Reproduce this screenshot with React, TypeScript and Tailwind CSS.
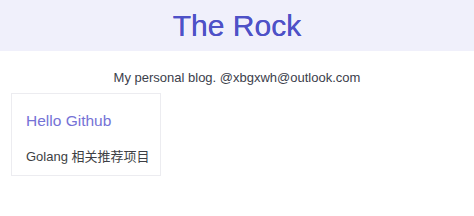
export default function App() {
  return (
    <div className="min-h-[216px] w-full bg-white font-['Liberation_Sans','Noto_Sans_CJK_SC',sans-serif]">
      <header className="flex h-[51px] items-center justify-center bg-[#f0f0fb]">
        <h1 className="text-[30px] leading-none text-[#4e51c7] [text-shadow:0_0_0.6px_#4e51c7]">The Rock</h1>
      </header>
      <p className="mt-[17px] text-center text-[13px] leading-[20px] text-[#3b404b]">
        My personal blog. @xbgxwh@outlook.com
      </p>
      <div className="ml-[11px] mt-[5px] w-[150px] border border-[#ececf0] px-[14px] pb-[9px] pt-[17px]">
        <h2 className="whitespace-nowrap text-[15.5px] leading-[20px] text-[#7572d6]">Hello Github</h2>
        <p className="mt-[17px] whitespace-nowrap text-[13px] leading-[18px] text-[#3d3f44]">Golang 相关推荐项目</p>
      </div>
    </div>
  );
}
